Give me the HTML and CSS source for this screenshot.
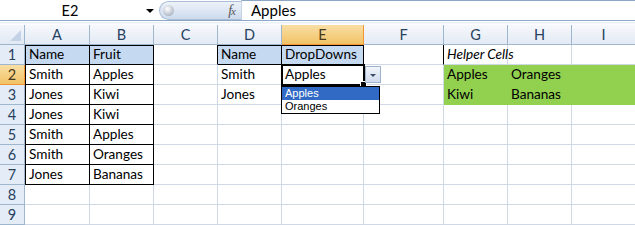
FILE: index.html
```html
<!DOCTYPE html>
<html lang="en">
<head>
    <meta charset="UTF-8">
    <title>DropDowns</title>
    <link rel="stylesheet" href="styles.css">
</head>
<body>

  <div class="formula-bar">
    <div class="name-box">
      <span class="name-text">E2</span>
      <span class="name-arrow"></span>
    </div>
    <div class="fx-pill">
      <span class="knob"></span>
      <span class="fx">f<i>x</i></span>
    </div>
    <div class="formula-input">Apples</div>
  </div>
  <div class="bar-gap"></div>

  <div class="sheet">
    <!-- column headers -->
    <div class="corner"><span class="corner-tri"></span></div>
    <div class="col-head">A</div>
    <div class="col-head">B</div>
    <div class="col-head">C</div>
    <div class="col-head">D</div>
    <div class="col-head selected">E</div>
    <div class="col-head">F</div>
    <div class="col-head">G</div>
    <div class="col-head">H</div>
    <div class="col-head">I</div>

    <!-- row 1 -->
    <div class="row-head">1</div>
    <div class="cell tbl first-col top blue">Name</div>
    <div class="cell tbl top blue">Fruit</div>
    <div class="cell black-right"></div>
    <div class="cell tbl top blue">Name</div>
    <div class="cell tbl top blue">DropDowns</div>
    <div class="cell black-right"></div>
    <div class="cell italic">Helper Cells</div>
    <div class="cell"></div>
    <div class="cell"></div>

    <!-- row 2 -->
    <div class="row-head selected">2</div>
    <div class="cell tbl first-col">Smith</div>
    <div class="cell tbl">Apples</div>
    <div class="cell"></div>
    <div class="cell">Smith</div>
    <div class="cell active">
      Apples
      <div class="active-box"><span class="fill-handle"></span></div>
      <div class="drop-btn"><span class="drop-tri"></span></div>
      <div class="drop-list">
        <div class="drop-item picked">Apples</div>
        <div class="drop-item">Oranges</div>
      </div>
    </div>
    <div class="cell"></div>
    <div class="cell green">Apples</div>
    <div class="cell green">Oranges</div>
    <div class="cell green"></div>

    <!-- row 3 -->
    <div class="row-head">3</div>
    <div class="cell tbl first-col">Jones</div>
    <div class="cell tbl">Kiwi</div>
    <div class="cell"></div>
    <div class="cell">Jones</div>
    <div class="cell"></div>
    <div class="cell"></div>
    <div class="cell green">Kiwi</div>
    <div class="cell green">Bananas</div>
    <div class="cell green"></div>

    <!-- row 4 -->
    <div class="row-head">4</div>
    <div class="cell tbl first-col">Jones</div>
    <div class="cell tbl">Kiwi</div>
    <div class="cell"></div><div class="cell"></div><div class="cell"></div>
    <div class="cell"></div><div class="cell"></div><div class="cell"></div><div class="cell"></div>

    <!-- row 5 -->
    <div class="row-head">5</div>
    <div class="cell tbl first-col">Smith</div>
    <div class="cell tbl">Apples</div>
    <div class="cell"></div><div class="cell"></div><div class="cell"></div>
    <div class="cell"></div><div class="cell"></div><div class="cell"></div><div class="cell"></div>

    <!-- row 6 -->
    <div class="row-head">6</div>
    <div class="cell tbl first-col">Smith</div>
    <div class="cell tbl">Oranges</div>
    <div class="cell"></div><div class="cell"></div><div class="cell"></div>
    <div class="cell"></div><div class="cell"></div><div class="cell"></div><div class="cell"></div>

    <!-- row 7 -->
    <div class="row-head">7</div>
    <div class="cell tbl first-col">Jones</div>
    <div class="cell tbl">Bananas</div>
    <div class="cell"></div><div class="cell"></div><div class="cell"></div>
    <div class="cell"></div><div class="cell"></div><div class="cell"></div><div class="cell"></div>

    <!-- row 8 -->
    <div class="row-head">8</div>
    <div class="cell first-pad"></div><div class="cell"></div><div class="cell"></div><div class="cell"></div><div class="cell"></div>
    <div class="cell"></div><div class="cell"></div><div class="cell"></div><div class="cell"></div>

    <!-- row 9 -->
    <div class="row-head">9</div>
    <div class="cell first-pad"></div><div class="cell"></div><div class="cell"></div><div class="cell"></div><div class="cell"></div>
    <div class="cell"></div><div class="cell"></div><div class="cell"></div><div class="cell"></div>
  </div>

</body>
</html>
```

FILE: styles.css
```css
body {
    margin: 0;
    background-color: #fff;
    font-family: 'Lato', 'Liberation Sans', sans-serif;
    font-size: 14.5px;
    color: #000;
    overflow: hidden;
}

/* formula bar */
.formula-bar {
    display: flex;
    height: 21px;
    border-bottom: 1px solid #8da7c6;
    box-sizing: border-box;
    background-color: #fff;
}

.name-box {
    width: 159px;
    display: flex;
    align-items: center;
    position: relative;
}

.name-text {
    width: 140px;
    text-align: center;
}

.name-arrow {
    width: 0;
    height: 0;
    border-left: 4px solid transparent;
    border-right: 4px solid transparent;
    border-top: 4px solid #000;
    margin-left: 6px;
    margin-top: 2px;
}

.fx-pill {
    width: 82px;
    height: 19px;
    margin-top: 1px;
    box-sizing: border-box;
    border: 1px solid #a9bdd8;
    border-right: none;
    border-radius: 10px 0 0 10px;
    background: linear-gradient(#edf2f9, #cddbee);
    display: flex;
    align-items: center;
    justify-content: space-between;
    padding: 0 6px 0 3px;
}

.knob {
    width: 11px;
    height: 11px;
    border-radius: 50%;
    background: radial-gradient(circle at 40% 35%, #fff, #b4bcc8 70%, #8e98a6);
}

.fx {
    font-family: 'Liberation Serif', serif;
    font-style: italic;
    font-size: 14px;
    color: #555;
    letter-spacing: -1px;
}

.fx i {
    font-size: 11px;
}

.formula-input {
    flex: 1;
    border-top: 1px solid #8da7c6;
    border-left: 1px solid #c5d3e6;
    padding-left: 9px;
    line-height: 19px;
    font-size: 15px;
}

.bar-gap {
    height: 4px;
    background: linear-gradient(#e7eef7, #fff);
    border-top: 1px solid #fff;
    box-sizing: border-box;
}

/* sheet */
.sheet {
    display: grid;
    grid-template-columns: 25px 65px 64px 64px 64px 82px 80px 64px 64px 64px;
    grid-auto-rows: 20px;
}

.corner {
    background: linear-gradient(#f3f6fb, #e1e9f4);
    border-right: 1px solid #9eb6ce;
    border-bottom: 1px solid #9eb6ce;
    position: relative;
}

.corner-tri {
    position: absolute;
    right: 3px;
    bottom: 3px;
    width: 0;
    height: 0;
    border-left: 11px solid transparent;
    border-bottom: 11px solid #c3d2e6;
}

.col-head {
    background: linear-gradient(#f6f8fc, #e3eaf4);
    border-right: 1px solid #9eb6ce;
    border-bottom: 1px solid #9eb6ce;
    box-sizing: border-box;
    text-align: center;
    line-height: 19px;
    color: #27415f;
}

.row-head {
    background: #e4ecf7;
    border-right: 1px solid #9eb6ce;
    border-bottom: 1px solid #9eb6ce;
    box-sizing: border-box;
    text-align: center;
    line-height: 20px;
    color: #27415f;
}

.col-head.selected,
.row-head.selected {
    background: linear-gradient(#f9dfa5, #f1c265);
    border-color: #f29536;
    color: #4a3a1c;
}

.cell {
    border-right: 1px solid #d0d7e5;
    border-bottom: 1px solid #d0d7e5;
    box-sizing: border-box;
    padding: 0 0 2px 3px;
    display: flex;
    align-items: flex-end;
    white-space: nowrap;
    font-size: 13.6px;
}

.cell.tbl {
    border-right-color: #000;
    border-bottom-color: #000;
}

.cell.first-col {
    box-shadow: inset 1px 0 #000;
}

.cell.first-col.top {
    box-shadow: inset 1px 1px #000;
}

.cell.top {
    box-shadow: inset 0 1px #000;
}

.cell.first-pad,
.cell.first-col {
    padding-left: 4px;
}

.cell.blue {
    background-color: #c5d9f1;
}

.cell.black-right {
    border-right-color: #000;
}

.cell.italic {
    font-style: italic;
}

.cell.green {
    background-color: #92d050;
    border-color: #92d050;
}

/* active cell + dropdown */
.cell.active {
    position: relative;
}

.active-box {
    position: absolute;
    left: -1px;
    top: -1px;
    width: 84px;
    height: 22px;
    border: 2px solid #000;
    box-sizing: border-box;
}

.fill-handle {
    position: absolute;
    right: -4px;
    bottom: -4px;
    width: 5px;
    height: 5px;
    background: #000;
    border: 1px solid #fff;
}

.drop-btn {
    position: absolute;
    left: 83px;
    top: 1px;
    width: 16px;
    height: 17px;
    box-sizing: border-box;
    border: 1px solid #9fb3cf;
    background: linear-gradient(#f1f5fb, #cfdbec);
    display: flex;
    align-items: center;
    justify-content: center;
    z-index: 2;
}

.drop-tri {
    width: 0;
    height: 0;
    border-left: 3px solid transparent;
    border-right: 3px solid transparent;
    border-top: 3px solid #3c4f6a;
    margin-top: 1px;
}

.drop-list {
    position: absolute;
    left: -1px;
    top: 21px;
    width: 99px;
    height: 28px;
    box-sizing: border-box;
    border: 1px solid #000;
    background: #fff;
    font-family: 'Liberation Sans', sans-serif;
    font-size: 11px;
    z-index: 3;
}

.drop-item {
    height: 13px;
    line-height: 13px;
    padding-left: 3px;
}

.drop-item.picked {
    background: #316ac5;
    color: #fff;
}
```
